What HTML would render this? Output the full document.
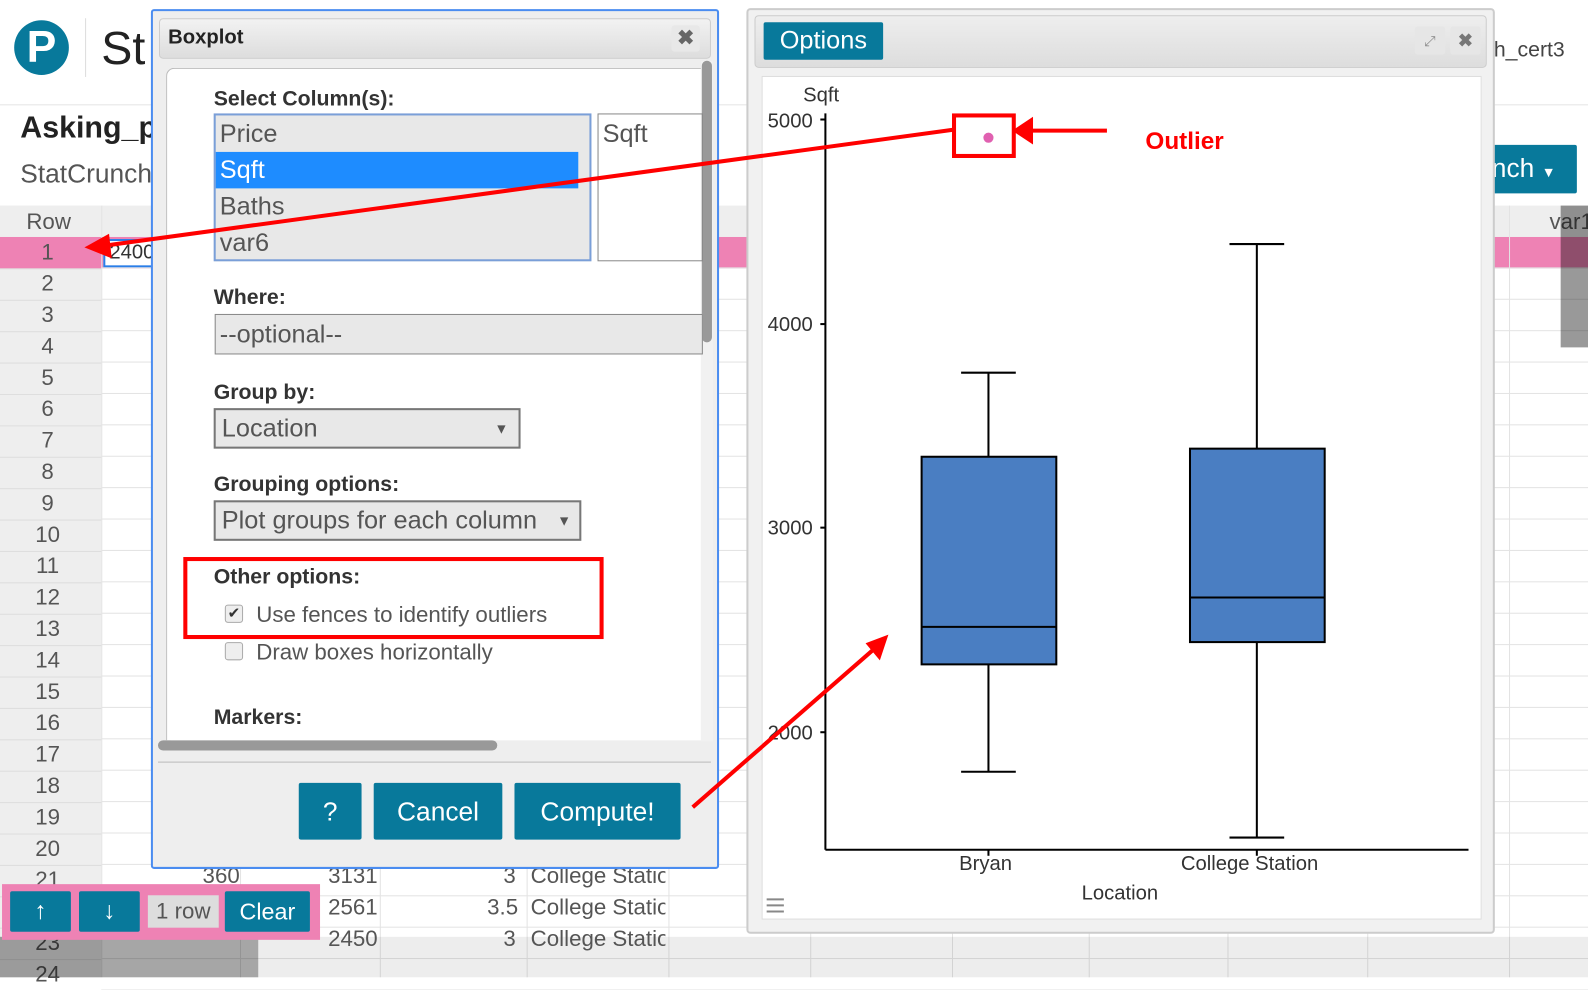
<!DOCTYPE html>
<html><head><meta charset="utf-8"><style>
*{box-sizing:border-box;margin:0;padding:0}
body{width:1588px;height:965px;overflow:hidden;background:#fff;font-family:"Liberation Sans",sans-serif;position:relative;color:#333}
#w{position:absolute;left:0;top:0;width:1568px;height:953px;transform:scale(1.01276);transform-origin:0 0}
.a{position:absolute}
.btn{position:absolute;background:#08799b;color:#fff;border-radius:2px;text-align:center}
.lbl{position:absolute;font-weight:bold;font-size:21px;color:#333}
</style></head><body><div id="w">
<div class="a" style="left:14px;top:20px;width:54px;height:54px;border-radius:50%;background:#08799b;color:#fff;font-size:44px;font-weight:bold;text-align:center;line-height:54px">P</div>
<div class="a" style="left:84px;top:18px;width:1px;height:58px;background:#ddd"></div>
<div class="a" style="left:100px;top:20px;font-size:46px;color:#222">St</div>
<div class="a" style="left:0;top:103px;width:1588px;height:1px;background:#e5e5e5"></div>
<div class="a" style="left:20px;top:110px;font-size:30px;font-weight:bold;color:#222">Asking_pr</div>
<div class="a" style="left:20px;top:156px;font-size:26px;color:#555">StatCrunch</div>
<div class="a" style="left:1475px;top:38px;font-size:21px;color:#444">h_cert3</div>
<div class="btn" style="left:1465px;top:143px;width:92px;height:48px;font-size:26px;line-height:46px;text-align:left;padding-left:8px">nch <span style="font-size:14px">&#9660;</span></div>
<div class="a" style="left:0;top:203px;width:1588px;height:31px;background:#eee"></div>
<div class="a" style="left:0;top:203px;width:100px;height:762px;background:#eee"></div>
<div class="a" style="left:26px;top:206px;font-size:22px;color:#555">Row</div>
<div class="a" style="left:1530px;top:206px;font-size:22px;color:#555">var1</div>
<div class="a" style="left:0;top:234px;width:1588px;height:31px;background:#ee82b4"></div>
<div class="a" style="left:102px;top:236px;width:60px;height:28px;border:2px solid #2a7ee8;background:#fff;font-size:20px;padding-left:4px">2400</div>
<div id="rows"></div>
<div class="a" style="left:1541px;top:203px;width:47px;height:140px;background:rgba(0,0,0,0.4)"></div>
<div class="a" style="left:0;top:925px;width:255px;height:40px;background:rgba(0,0,0,0.35)"></div>
<div class="a" style="left:255px;top:925px;width:1333px;height:40px;background:rgba(0,0,0,0.07)"></div>
<div class="a" style="left:200px;top:852px;font-size:22px;color:#555">360</div>
<div class="a" style="left:324px;top:852px;font-size:22px;color:#555">3131</div>
<div class="a" style="left:324px;top:883px;font-size:22px;color:#555">2561</div>
<div class="a" style="left:324px;top:914px;font-size:22px;color:#555">2450</div>
<div class="a" style="left:497px;top:852px;font-size:22px;color:#555">3</div>
<div class="a" style="left:481px;top:883px;font-size:22px;color:#555">3.5</div>
<div class="a" style="left:497px;top:914px;font-size:22px;color:#555">3</div>
<div class="a" style="left:524px;top:852px;font-size:22px;color:#555;width:133px;overflow:hidden;white-space:nowrap">College Station</div>
<div class="a" style="left:524px;top:883px;font-size:22px;color:#555;width:133px;overflow:hidden;white-space:nowrap">College Station</div>
<div class="a" style="left:524px;top:914px;font-size:22px;color:#555;width:133px;overflow:hidden;white-space:nowrap">College Station</div>
<div class="a" style="left:2px;top:873px;width:314px;height:55px;background:#ee82b4"></div>
<div class="btn" style="left:10px;top:880px;width:60px;height:40px;font-size:24px;line-height:40px">↑</div>
<div class="btn" style="left:78px;top:880px;width:60px;height:40px;font-size:24px;line-height:40px">↓</div>
<div class="a" style="left:146px;top:884px;width:70px;height:32px;background:#ddd;font-size:22px;line-height:32px;text-align:center;color:#555">1 row</div>
<div class="btn" style="left:222px;top:880px;width:84px;height:40px;font-size:23px;line-height:40px">Clear</div>
<div class="a" style="left:149px;top:9px;width:561px;height:849px;background:#eee;border:2px solid #4a8cf0;border-radius:3px"></div>
<div class="a" style="left:157px;top:18px;width:545px;height:40px;background:linear-gradient(#f2f2f2,#ddd);border:1px solid #ccc;border-radius:4px"></div>
<div class="a" style="left:166px;top:26px;font-size:20px;font-weight:bold;color:#222">Boxplot</div>
<div class="a" style="left:663px;top:25px;width:28px;height:26px;background:#e8e8e8;border-radius:3px;font-size:20px;text-align:center;line-height:26px;color:#666;font-weight:bold">✖</div>
<div class="a" style="left:164px;top:67px;width:530px;height:664px;background:#fff;border:1px solid #bbb;border-right:none;border-bottom:none;border-radius:8px 0 0 0"></div>
<div class="a" style="left:692px;top:60px;width:12px;height:672px;background:#f1f1f1"></div>
<div class="a" style="left:693px;top:60px;width:10px;height:278px;background:#999;border-radius:5px"></div>
<div class="a" style="left:156px;top:731px;width:335px;height:10px;background:#999;border-radius:5px"></div>
<div class="a" style="left:156px;top:752px;width:546px;height:1px;background:#bbb"></div>
<div class="lbl" style="left:211px;top:86px">Select Column(s):</div>
<div class="a" style="left:211px;top:112px;width:373px;height:146px;background:#e8e8e8;border:2px solid #7a9fd8;font-size:25px;color:#555">
<div style="height:36px;padding-left:4px;line-height:36px">Price</div>
<div style="height:36px;padding-left:4px;line-height:36px;background:#1e8cff;color:#fff;width:358px">Sqft</div>
<div style="height:36px;padding-left:4px;line-height:36px">Baths</div>
<div style="height:36px;padding-left:4px;line-height:36px">var6</div></div>
<div class="a" style="left:590px;top:112px;width:104px;height:146px;border:1px solid #888;font-size:25px;padding-left:4px;line-height:38px;color:#555">Sqft</div>
<div class="lbl" style="left:211px;top:282px">Where:</div>
<div class="a" style="left:212px;top:310px;width:482px;height:40px;background:#e8e8e8;border:1px solid #888;font-size:25px;line-height:38px;padding-left:4px;color:#555">--optional--</div>
<div class="lbl" style="left:211px;top:376px">Group by:</div>
<div class="a" style="left:211px;top:403px;width:303px;height:40px;background:#e8e8e8;border:2px solid #777;font-size:25px;line-height:36px;padding-left:6px;color:#555">Location<span style="position:absolute;right:10px;font-size:14px">▼</span></div>
<div class="lbl" style="left:211px;top:467px">Grouping options:</div>
<div class="a" style="left:211px;top:494px;width:363px;height:40px;background:#e8e8e8;border:2px solid #777;font-size:25px;line-height:36px;padding-left:6px;color:#555">Plot groups for each column<span style="position:absolute;right:8px;font-size:14px">▼</span></div>
<div class="a" style="left:181px;top:550px;width:415px;height:81px;border:4px solid #f00"></div>
<div class="lbl" style="left:211px;top:558px">Other options:</div>
<div class="a" style="left:222px;top:597px;width:18px;height:18px;border:1px solid #aaa;background:#eee;border-radius:3px;font-size:15px;line-height:16px;text-align:center">✔</div>
<div class="a" style="left:253px;top:594px;font-size:22px;color:#555">Use fences to identify outliers</div>
<div class="a" style="left:222px;top:634px;width:18px;height:18px;border:1px solid #aaa;background:#eee;border-radius:3px"></div>
<div class="a" style="left:253px;top:631px;font-size:22px;color:#555">Draw boxes horizontally</div>
<div class="lbl" style="left:211px;top:697px">Markers:</div>
<div class="btn" style="left:295px;top:773px;width:62px;height:56px;font-size:26px;line-height:56px">?</div>
<div class="btn" style="left:369px;top:773px;width:127px;height:56px;font-size:26px;line-height:56px">Cancel</div>
<div class="btn" style="left:508px;top:773px;width:164px;height:56px;font-size:26px;line-height:56px">Compute!</div>
<div class="a" style="left:737px;top:8px;width:739px;height:914px;background:#f1f1f1;border:2px solid #ccc;border-radius:4px"></div>
<div class="a" style="left:745px;top:15px;width:723px;height:52px;background:linear-gradient(#eee,#ddd);border:1px solid #ccc;border-radius:4px"></div>
<div class="btn" style="left:754px;top:22px;width:118px;height:37px;font-size:25px;line-height:37px">Options</div>
<div class="a" style="left:1397px;top:26px;width:30px;height:28px;background:#e6e6e6;border-radius:3px;font-size:14px;text-align:center;line-height:28px;color:#888">⤢</div>
<div class="a" style="left:1432px;top:26px;width:30px;height:28px;background:#e6e6e6;border-radius:3px;font-size:18px;text-align:center;line-height:28px;color:#777;font-weight:bold">✖</div>
<div class="a" style="left:752px;top:75px;width:711px;height:833px;background:#fff;border:1px solid #ddd"></div>
<svg class="a" style="left:0;top:0" width="1588" height="965">
<g font-family="Liberation Sans" font-size="20" fill="#333">
<text x="793" y="100">Sqft</text>
<text x="758" y="126">5000</text><text x="758" y="327">4000</text><text x="758" y="528">3000</text><text x="758" y="730">2000</text>
<text x="947" y="859">Bryan</text><text x="1166" y="859">College Station</text><text x="1068" y="888">Location</text>
</g>
<g stroke="#000" stroke-width="2" fill="none">
<line x1="815" y1="112" x2="815" y2="839"/><line x1="815" y1="839" x2="1450" y2="839"/>
<line x1="810" y1="118" x2="815" y2="118"/><line x1="810" y1="320" x2="815" y2="320"/><line x1="810" y1="521" x2="815" y2="521"/><line x1="810" y1="723" x2="815" y2="723"/>
<line x1="976" y1="368" x2="976" y2="451"/><line x1="949" y1="368" x2="1003" y2="368"/>
<line x1="976" y1="656" x2="976" y2="762"/><line x1="949" y1="762" x2="1003" y2="762"/>
<line x1="1241" y1="241" x2="1241" y2="443"/><line x1="1214" y1="241" x2="1268" y2="241"/>
<line x1="1241" y1="634" x2="1241" y2="827"/><line x1="1214" y1="827" x2="1268" y2="827"/>
<line x1="976" y1="839" x2="976" y2="845"/><line x1="1241" y1="839" x2="1241" y2="845"/>
</g>
<rect x="910" y="451" width="133" height="205" fill="#4a7ec2" stroke="#000" stroke-width="2"/>
<line x1="910" y1="619" x2="1043" y2="619" stroke="#000" stroke-width="2"/>
<rect x="1175" y="443" width="133" height="191" fill="#4a7ec2" stroke="#000" stroke-width="2"/>
<line x1="1175" y1="590" x2="1308" y2="590" stroke="#000" stroke-width="2"/>
<circle cx="976" cy="136" r="5" fill="#e060b0"/>
<g stroke="#888" stroke-width="2"><line x1="757" y1="888" x2="774" y2="888"/><line x1="757" y1="894" x2="774" y2="894"/><line x1="757" y1="900" x2="774" y2="900"/></g>
<rect x="942" y="114" width="59" height="40" fill="none" stroke="#f00" stroke-width="4"/>
<g stroke="#f00" stroke-width="4" fill="#f00">
<line x1="942" y1="128" x2="100" y2="243"/><polygon points="88,244 106,234 108,252"/>
<line x1="1093" y1="129" x2="1015" y2="129"/><polygon points="1003,129 1018,119 1018,139"/>
<line x1="684" y1="797" x2="864" y2="640"/><polygon points="874,630 858,636 868,648"/>
</g>
<text x="1131" y="147" font-family="Liberation Sans" font-size="24" font-weight="bold" fill="#f00">Outlier</text>
</svg>
</div>
<script>
var r=document.getElementById('rows'),h='';
for(var i=1;i<=24;i++){var y=234+(i-1)*31;
if(i>1)h+='<div class="a" style="left:0;top:'+y+'px;width:100px;height:31px;border-top:1px solid #ddd"></div>';
h+='<div class="a" style="left:0;top:'+(y+2)+'px;width:94px;text-align:center;font-size:22px;color:#555">'+i+'</div>';
h+='<div class="a" style="left:100px;top:'+(y+30)+'px;width:1488px;height:1px;background:#e3e3e3"></div>';}
[100,237,375,520,660,800,940,1075,1212,1350,1490].forEach(function(x){h+='<div class="a" style="left:'+x+'px;top:203px;width:1px;height:762px;background:#e3e3e3"></div>'});
r.innerHTML=h;
</script>
</body></html>
